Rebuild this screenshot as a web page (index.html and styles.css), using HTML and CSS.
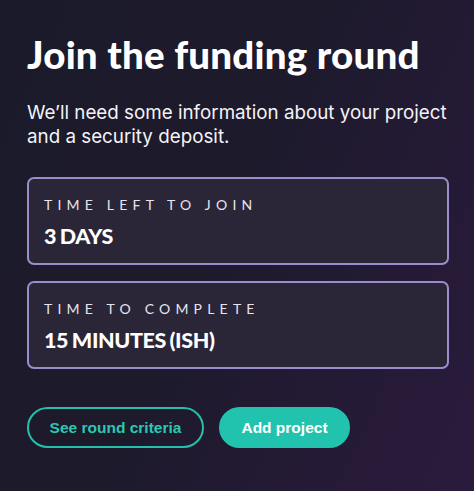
FILE: index.html
```html
<!DOCTYPE html>
<html lang="en">
<head>
<meta charset="utf-8">
<title>Join the funding round</title>
<link rel="stylesheet" href="styles.css">
</head>
<body>
<main class="panel">
  <h1 class="title">Join the funding round</h1>
  <p class="lead">We’ll need some information about your project and a security deposit.</p>
  <section class="stat">
    <div class="stat-label">Time left to join</div>
    <div class="stat-value">3 Days</div>
  </section>
  <section class="stat">
    <div class="stat-label">Time to complete</div>
    <div class="stat-value">15 Minutes (ish)</div>
  </section>
  <div class="actions">
    <button class="btn btn-outline">See round criteria</button>
    <button class="btn btn-solid">Add project</button>
  </div>
</main>
</body>
</html>
```

FILE: styles.css
```css
html, body {
  margin: 0;
  padding: 0;
  height: 100%;
}
body {
  background: linear-gradient(115deg, #1b1a2a 0%, #1d1a2c 45%, #2b1a3d 100%);
  color: #ffffff;
  font-family: "Inter", "Liberation Sans", sans-serif;
}
.panel {
  box-sizing: border-box;
  height: 491px;
  padding: 32px 25px 0 27px;
  display: flex;
  flex-direction: column;
}
.title {
  margin: 0;
  font-family: "Lato", "Liberation Sans", sans-serif;
  font-weight: 900;
  font-size: 38.5px;
  line-height: 44px;
  letter-spacing: 0.2px;
}
.lead {
  margin: 25px 0 0 0;
  font-size: 18.8px;
  line-height: 24px;
  font-weight: 400;
  color: #f4f3f8;
}
.stat {
  margin-top: 28px;
  box-sizing: border-box;
  height: 88px;
  flex: 0 0 88px;
  border: 2px solid #9a8dcb;
  border-radius: 7px;
  background: #2a2637;
  padding: 18px 15px 0 15px;
}
.stat + .stat {
  margin-top: 16px;
}
.stat-label {
  font-family: "Lato", "Liberation Sans", sans-serif;
  font-size: 14px;
  line-height: 16px;
  letter-spacing: 5.2px;
  text-transform: uppercase;
  color: #e6e4ee;
}
.stat-value {
  margin-top: 11px;
  font-family: "Lato", "Liberation Sans", sans-serif;
  font-weight: 900;
  font-size: 21.5px;
  line-height: 24px;
  letter-spacing: -0.4px;
  word-spacing: -1px;
  text-transform: uppercase;
}
.actions {
  margin-top: 38px;
  display: flex;
  gap: 15px;
}
.btn {
  box-sizing: border-box;
  height: 41px;
  border-radius: 21px;
  font-family: "Liberation Sans", "Inter", sans-serif;
  font-weight: 700;
  font-size: 15.5px;
  padding: 0;
  white-space: nowrap;
  cursor: pointer;
}
.btn-outline {
  background: transparent;
  border: 2px solid #27bfac;
  color: #2cc7b3;
  width: 177px;
}
.btn-solid {
  background: #22c3ae;
  border: 2px solid #22c3ae;
  color: #ffffff;
  width: 131px;
}
```
